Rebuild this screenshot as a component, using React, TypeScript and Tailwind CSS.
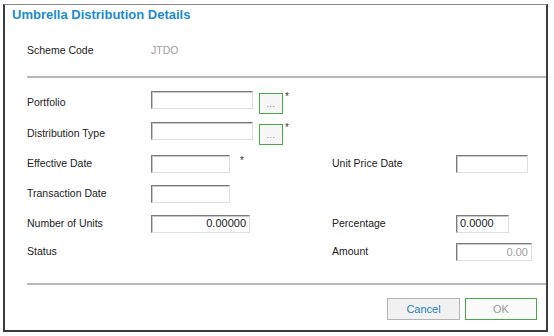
import React from "react";

const font = { fontFamily: '"Liberation Sans", Arial, sans-serif' };

const Field = ({ w, value = "", align = "right", muted = false }: { w: string; value?: string; align?: "left" | "right"; muted?: boolean }) => (
  <div
    className={`${w} h-[18px] bg-white border border-t-[#7a7a7a] border-l-[#7a7a7a] border-b-[#dedede] border-r-[#dedede] shadow-[inset_1px_1px_0_#c8c8c8] flex items-center px-[3px] text-[11px] ${
      align === "right" ? "justify-end" : "justify-start"
    } ${muted ? "text-[#a0a0a0]" : "text-[#222]"}`}
  >
    {value}
  </div>
);

const Lookup = () => (
  <div className="ml-[6px] mt-[2px] w-[24px] h-[21px] border border-[#4ca64c] bg-[#f6f6f6] flex items-end justify-center pb-[4px] text-[9px] tracking-[0.5px] leading-none text-[#888]">
    ...
  </div>
);

const Star = () => <span className="ml-[2px] mt-[1px] text-[10px] leading-none text-[#333]">*</span>;

const Row = ({ h, children }: { h: string; children: React.ReactNode }) => (
  <div className={`grid grid-cols-[124px_181px_124px_auto] items-center ${h}`}>{children}</div>
);

const Label = ({ children }: { children?: React.ReactNode }) => (
  <div className="text-[10.5px] text-[#222]">{children}</div>
);

export default function App() {
  return (
    <div className="w-[554px] h-[336px] bg-white pt-[4px] pl-[3px]" style={font}>
      <div className="w-[545px] h-[328px] border-2 border-[#3c3c3c] border-t-[#8c8c8c] border-t-[1.5px] flex flex-col">
        <div className="pl-[7px] pt-[1px] leading-[18px] text-[13px] font-bold text-[#1a8bd0]">Umbrella Distribution Details</div>

        <div className="pl-[22px] mt-[17px] h-[20px] flex items-center">
          <div className="w-[124px] text-[10.5px] text-[#222]">Scheme Code</div>
          <div className="text-[10.5px] text-[#a0a0a0]">JTDO</div>
        </div>

        <div className="ml-[22px] mt-[15px] h-[2px] bg-[#b8b8b8]" />

        <div className="pl-[22px] mt-[9px] flex flex-col">
          <Row h="h-[31px]">
            <Label>Portfolio</Label>
            <div className="flex items-start">
              <Field w="w-[102px]" />
              <Lookup />
              <Star />
            </div>
          </Row>
          <Row h="h-[31px]">
            <Label>Distribution Type</Label>
            <div className="flex items-start">
              <Field w="w-[102px]" />
              <Lookup />
              <Star />
            </div>
          </Row>
          <Row h="h-[30px]">
            <Label>Effective Date</Label>
            <div className="flex items-start">
              <Field w="w-[79px]" />
              <span className="ml-[10px] mt-[1px] text-[10px] leading-none text-[#333]">*</span>
            </div>
            <Label>Unit Price Date</Label>
            <Field w="w-[72px]" />
          </Row>
          <Row h="h-[30px]">
            <Label>Transaction Date</Label>
            <Field w="w-[79px]" />
            <div />
            <div />
          </Row>
          <Row h="h-[29px]">
            <Label>Number of Units</Label>
            <Field w="w-[99px]" value="0.00000" />
            <Label>Percentage</Label>
            <Field w="w-[53px]" value="0.0000" align="left" />
          </Row>
          <Row h="h-[28px]">
            <Label>Status</Label>
            <div />
            <Label>Amount</Label>
            <Field w="w-[76px]" value="0.00" muted />
          </Row>
        </div>

        <div className="ml-[22px] mt-[17px] h-[2px] bg-[#b8b8b8]" />

        <div className="mt-[13px] mr-[9px] flex justify-end gap-[5px]">
          <button className="w-[73px] h-[22px] border border-[#b4b4b4] bg-[#f1f1f1] text-[11px] text-[#1a7fc4]">Cancel</button>
          <button className="w-[72px] h-[22px] border-[1.5px] border-[#4ca64c] bg-[#fafafa] text-[11px] text-[#9a9a9a]">OK</button>
        </div>
      </div>
    </div>
  );
}
